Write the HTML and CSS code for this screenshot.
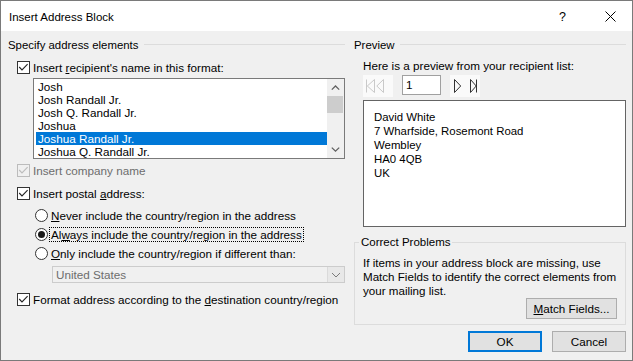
FILE: index.html
```html
<!DOCTYPE html>
<html>
<head>
<meta charset="utf-8">
<title>Insert Address Block</title>
<link rel="stylesheet" href="styles.css">
</head>
<body>
<div class="window">
  <div class="titlebar">
    <span class="title">Insert Address Block</span>
    <span class="help">?</span>
    <svg class="close" width="11" height="11" viewBox="0 0 11 11"><path d="M0.5 0.5L10.5 10.5M10.5 0.5L0.5 10.5" stroke="#000" stroke-width="1" fill="none"/></svg>
  </div>
  <div class="content">
    <div class="left">
      <div class="section-head"><span>Specify address elements</span><i class="rule"></i></div>

      <div class="cb-row name-row">
        <span class="box"><svg width="11" height="11" viewBox="0 0 11 11"><path d="M1.2 5L4 7.9L9.6 2.2" stroke="#222" stroke-width="1.1" fill="none"/></svg></span>
        <span class="lbl">Insert <u>r</u>ecipient's name in this format:</span>
      </div>

      <div class="listbox">
        <ul class="items">
          <li>Josh</li>
          <li>Josh Randall Jr.</li>
          <li>Josh Q. Randall Jr.</li>
          <li>Joshua</li>
          <li class="sel">Joshua Randall Jr.</li>
          <li>Joshua Q. Randall Jr.</li>
        </ul>
        <div class="vscroll">
          <svg class="arrow" width="17" height="17" viewBox="0 0 17 17"><path d="M4.8 10.6L8.5 7L12.2 10.6" stroke="#606060" stroke-width="1.3" fill="none"/></svg>
          <div class="thumb"></div>
          <div class="track"></div>
          <svg class="arrow" width="17" height="17" viewBox="0 0 17 17"><path d="M4.8 6.6L8.5 10.2L12.2 6.6" stroke="#606060" stroke-width="1.3" fill="none"/></svg>
        </div>
      </div>

      <div class="cb-row company-row disabled">
        <span class="box"><svg width="11" height="11" viewBox="0 0 11 11"><path d="M1.2 5L4 7.9L9.6 2.2" stroke="#bcbcbc" stroke-width="1.1" fill="none"/></svg></span>
        <span class="lbl">Insert company name</span>
      </div>

      <div class="cb-row postal-row">
        <span class="box"><svg width="11" height="11" viewBox="0 0 11 11"><path d="M1.2 5L4 7.9L9.6 2.2" stroke="#222" stroke-width="1.1" fill="none"/></svg></span>
        <span class="lbl">Insert postal <u>a</u>ddress:</span>
      </div>

      <div class="radios">
        <div class="radio-row"><span class="radio"></span><span class="rlbl"><u>N</u>ever include the country/region in the address</span></div>
        <div class="radio-row"><span class="radio on"></span><span class="rlbl focus">Al<u>w</u>ays include the country/region in the address</span></div>
        <div class="radio-row"><span class="radio"></span><span class="rlbl"><u>O</u>nly include the country/region if different than:</span></div>
      </div>

      <div class="combo">
        <span class="combo-text">United States</span>
        <span class="combo-btn"><svg width="10" height="6" viewBox="0 0 10 6"><path d="M1 1L5 5L9 1" stroke="#7a7a7a" stroke-width="1" fill="none"/></svg></span>
      </div>

      <div class="cb-row format-row">
        <span class="box"><svg width="11" height="11" viewBox="0 0 11 11"><path d="M1.2 5L4 7.9L9.6 2.2" stroke="#222" stroke-width="1.1" fill="none"/></svg></span>
        <span class="lbl">Format address according to the <u>d</u>estination country/region</span>
      </div>
    </div>

    <div class="right">
      <div class="section-head preview-head"><span>Preview</span><i class="rule"></i></div>
      <div class="hint">Here is a preview from your recipient list:</div>
      <div class="nav">
        <span class="navbox">
          <svg width="30" height="22" viewBox="0 0 30 22"><path d="M3.5 4.5V17.5M11.5 4.5L4.3 11L11.5 17.5Z M20.5 4.5L13.8 11L20.5 17.5Z" stroke="#c9c9c9" stroke-width="1" fill="none"/></svg>
        </span>
        <span class="navinput">1</span>
        <span class="navbox">
          <svg width="30" height="22" viewBox="0 0 30 22"><path d="M4.5 4.5L10.7 11L4.5 17.5Z M20.5 4.5L26.2 11L20.5 17.5Z M26.5 4.5V17.5" stroke="#333" stroke-width="1" fill="none"/></svg>
        </span>
      </div>
      <div class="preview-box">
        <div>David White</div>
        <div>7 Wharfside, Rosemont Road</div>
        <div>Wembley</div>
        <div>HA0 4QB</div>
        <div>UK</div>
      </div>
      <fieldset class="problems">
        <legend>Correct Problems</legend>
        <p class="problems-text">If items in your address block are missing, use<br>Match Fields to identify the correct elements from<br>your mailing list.</p>
        <button class="btn match"><u>M</u>atch Fields...</button>
      </fieldset>
      <div class="actions">
        <button class="btn ok">OK</button>
        <button class="btn">Cancel</button>
      </div>
    </div>
  </div>
</div>
</body>
</html>
```

FILE: styles.css
```css
* { box-sizing: border-box; }

body {
  margin: 0;
  font-family: "Liberation Sans", Arial, sans-serif;
  font-size: 11.7px;
  line-height: 14px;
  color: #000;
  background: #f0f0f0;
}

.window {
  width: 633px;
  height: 361px;
  border: 1px solid #7a7a7a;
  background: #f0f0f0;
  display: flex;
  flex-direction: column;
  overflow: hidden;
}

.titlebar {
  flex: none;
  height: 30px;
  background: #fff;
  display: flex;
  align-items: center;
  padding: 0 16px 0 8px;
}

.title {
  font-size: 11.5px;
  padding-top: 1px;
}

.help {
  margin-left: auto;
  margin-right: 39px;
  font-size: 12.5px;
  padding-top: 1px;
}

.close {
  display: block;
  margin-top: 1px;
}

.content {
  display: flex;
  gap: 9px;
  padding: 7px 6px 0 7px;
}

.left {
  width: 337px;
  display: flex;
  flex-direction: column;
}

.right {
  width: 272px;
  display: flex;
  flex-direction: column;
}

.section-head {
  display: flex;
  align-items: center;
  gap: 6px;
  height: 14px;
  font-size: 11.4px;
}

.section-head span { white-space: nowrap; }

.rule {
  flex: 1;
  height: 1px;
  background: #dcdcdc;
  margin-top: -1px;
}

.preview-head { gap: 5px; }

/* checkboxes */
.cb-row {
  display: flex;
  align-items: center;
  height: 13px;
  margin-left: 9px;
  gap: 3px;
  white-space: nowrap;
}

.box {
  flex: none;
  width: 13px;
  height: 13px;
  border: 1px solid #333;
  background: #fff;
  display: flex;
}

.box svg { display: block; }

.disabled .box {
  border-color: #bcbcbc;
  background: #f0f0f0;
}

.disabled .lbl { color: #6d6d6d; }

.name-row { margin-top: 9px; }
.company-row { margin-top: 5px; }
.postal-row { margin-top: 10px; }
.format-row { margin-top: 10px; }

/* listbox */
.listbox {
  margin-top: 4px;
  margin-left: 25px;
  width: 312px;
  height: 81px;
  border: 1px solid #7a7a7a;
  background: #fff;
  display: flex;
}

.items {
  list-style: none;
  margin: 0;
  padding: 1px 0 0 2px;
  flex: 1;
}

.items li {
  height: 13px;
  line-height: 13px;
  padding-left: 2px;
  white-space: nowrap;
}

.items li.sel {
  background: #0078d7;
  color: #fff;
}

.vscroll {
  width: 17px;
  background: #f0f0f0;
  display: flex;
  flex-direction: column;
}

.arrow { display: block; flex: none; }

.thumb {
  height: 17px;
  background: #cdcdcd;
  margin: 0 1px 0 0;
}

.track { flex: 1; }

/* radios */
.radios {
  margin-top: 9px;
  margin-left: 27px;
  display: flex;
  flex-direction: column;
  gap: 6px;
}

.radio-row {
  display: flex;
  align-items: center;
  height: 13px;
  gap: 2px;
  white-space: nowrap;
}

.radio {
  flex: none;
  width: 13px;
  height: 13px;
  border: 1px solid #333;
  border-radius: 50%;
  background: #fff;
  display: flex;
  align-items: center;
  justify-content: center;
}

.radio.on::after {
  content: "";
  width: 7px;
  height: 7px;
  border-radius: 50%;
  background: #1a1a1a;
}

.rlbl {
  height: 13px;
  line-height: 13px;
  padding: 0 1px;
}

.rlbl.focus {
  outline: 1px dotted #000;
  outline-offset: 0;
}

/* combo */
.combo {
  margin-top: 6px;
  margin-left: 44px;
  width: 293px;
  height: 17px;
  border: 1px solid #cccccc;
  background: #f0f0f0;
  display: flex;
}

.combo-text {
  flex: 1;
  color: #6d6d6d;
  padding-left: 3px;
  line-height: 15px;
}

.combo-btn {
  width: 17px;
  border-left: 1px solid #dadada;
  background: #e8e8e8;
  display: flex;
  align-items: center;
  justify-content: center;
}

.combo-btn svg { display: block; }

/* preview */
.hint {
  margin-top: 7px;
  margin-left: 9px;
  white-space: nowrap;
}

.nav {
  margin-top: 2px;
  margin-left: 9px;
  display: flex;
  align-items: flex-start;
  gap: 9px;
}

.navbox {
  width: 30px;
  height: 22px;
  background: #fafafa;
}

.navbox svg { display: block; }

.navinput {
  width: 39px;
  height: 20px;
  border: 1px solid #a0a0a0;
  background: #fff;
  padding-left: 3px;
  line-height: 18px;
}

.preview-box {
  margin-top: 3px;
  margin-left: 9px;
  width: 263px;
  height: 127px;
  border: 1px solid #646464;
  background: #fff;
  padding: 9px 10px 0 10px;
  font-size: 11.4px;
  line-height: 14px;
  white-space: nowrap;
}

.problems {
  margin: 8px 0 0 0;
  min-width: 0;
  height: 90px;
  border: 1px solid #dcdcdc;
  padding: 7px 8px 5px 8px;
  display: flex;
  flex-direction: column;
}

.problems legend {
  padding: 0 2px;
  margin-left: -4px;
  line-height: 14px;
  font-size: 11.5px;
  white-space: nowrap;
}

.problems-text {
  margin: 0;
  font-size: 11.6px;
  white-space: nowrap;
}

.btn {
  font-family: "Liberation Sans", Arial, sans-serif;
  font-size: 11.7px;
  color: #000;
  background: #e1e1e1;
  border: 1px solid #adadad;
  height: 21px;
  padding: 0;
  margin: 0;
  line-height: 19px;
}

.match {
  width: 91px;
  align-self: flex-end;
}

.actions {
  margin-top: 6px;
  display: flex;
  justify-content: flex-end;
  gap: 10px;
}

.actions .btn { width: 74px; }

.btn.ok {
  border: 2px solid #0078d7;
  line-height: 17px;
}
```
